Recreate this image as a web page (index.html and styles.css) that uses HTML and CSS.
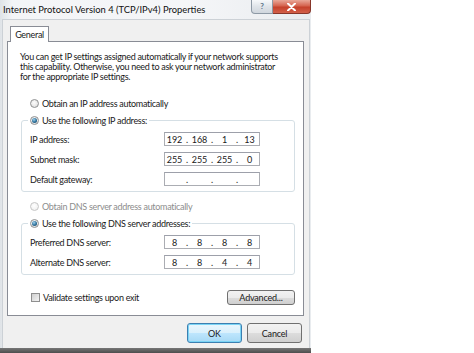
FILE: index.html
```html
<html>
<head>
<title>Internet Protocol Version 4 (TCP/IPv4) Properties</title>
<meta name="viewport" content="width=device-width, initial-scale=1">
<link rel="stylesheet" href="styles.css">
</head>
<body>
  <div class="window">
    <div class="titlebar">
      <span class="title">Internet Protocol Version 4 (TCP/IPv4) Properties</span>
      <div class="caption">
        <span class="help">?</span>
        <span class="close">
          <svg width="9" height="8" viewBox="0 0 9 8">
            <path d="M1 0.5 L8 7.5 M8 0.5 L1 7.5" stroke="#fff" stroke-width="2" stroke-linecap="round"></path>
          </svg>
        </span>
      </div>
    </div>
    <div class="client">
      <div class="tabs"><span class="tab">General</span></div>
      <div class="panel">
        <p class="intro">You can get IP settings assigned automatically if your network supports<br>this capability. Otherwise, you need to ask your network administrator<br>for the appropriate IP settings.</p>

        <div class="opt first"><span class="radio"></span>Obtain an IP address automatically</div>
        <fieldset class="group">
          <legend><span class="opt"><span class="radio on"></span>Use the following IP address:</span></legend>
          <div class="row"><span class="lbl">IP address:</span>
            <div class="ip"><span class="oct">192</span><span class="dot">.</span><span class="oct">168</span><span class="dot">.</span><span class="oct">1</span><span class="dot">.</span><span class="oct">13</span></div>
          </div>
          <div class="row"><span class="lbl">Subnet mask:</span>
            <div class="ip"><span class="oct">255</span><span class="dot">.</span><span class="oct">255</span><span class="dot">.</span><span class="oct">255</span><span class="dot">.</span><span class="oct">0</span></div>
          </div>
          <div class="row"><span class="lbl">Default gateway:</span>
            <div class="ip"><span class="oct"></span><span class="dot">.</span><span class="oct"></span><span class="dot">.</span><span class="oct"></span><span class="dot">.</span><span class="oct"></span></div>
          </div>
        </fieldset>

        <div class="opt off"><span class="radio"></span>Obtain DNS server address automatically</div>
        <fieldset class="group">
          <legend><span class="opt"><span class="radio on"></span>Use the following DNS server addresses:</span></legend>
          <div class="row"><span class="lbl">Preferred DNS server:</span>
            <div class="ip"><span class="oct">8</span><span class="dot">.</span><span class="oct">8</span><span class="dot">.</span><span class="oct">8</span><span class="dot">.</span><span class="oct">8</span></div>
          </div>
          <div class="row"><span class="lbl">Alternate DNS server:</span>
            <div class="ip"><span class="oct">8</span><span class="dot">.</span><span class="oct">8</span><span class="dot">.</span><span class="oct">4</span><span class="dot">.</span><span class="oct">4</span></div>
          </div>
        </fieldset>

        <div class="footer">
          <label class="check"><span class="box"></span>Validate settings upon exit</label>
          <button class="btn adv">Advanced...</button>
        </div>
      </div>
      <div class="actions">
        <button class="btn ok">OK</button>
        <button class="btn">Cancel</button>
      </div>
    </div>
  </div>
  <div class="shadow"></div>
</body>
</html>
```

FILE: styles.css
```css
body {
  margin: 0;
  background: #fff;
  font-family: Lato, "Noto Sans", sans-serif;
  font-size: 9px;
  letter-spacing: -0.3px;
  color: #1a1a1a;
}
.window {
  width: 311px;
  height: 348px;
  display: flex;
  flex-direction: column;
  background: linear-gradient(90deg, #dfe3e7, #f3f5f7 4%, #f5f6f8 60%, #e9ecef);
}
.titlebar {
  height: 19px;
  display: flex;
  justify-content: space-between;
  align-items: flex-start;
}
.title {
  padding: 4px 0 0 3px;
  font-size: 9.4px;
  letter-spacing: 0;
  line-height: 12px;
  color: #111;
}
.caption {display: flex;}
.help {
  width: 20px;
  height: 13px;
  border: 1px solid #8d99a5;
  border-top: 0;
  border-radius: 0 0 0 4px;
  background: linear-gradient(#f7f9fb, #dfe4e9 50%, #cfd6dd);
  color: #5d7389;
  font-size: 8px;
  line-height: 13px;
  text-align: center;
  font-weight: bold;
}
.close {
  width: 37px;
  height: 13px;
  border: 1px solid #87362a;
  border-top: 0;
  border-left: 0;
  border-radius: 0 0 4px 0;
  background: linear-gradient(#e9a899, #d5644f 45%, #c5412b 55%, #d2604a);
  display: flex;
  align-items: center;
  justify-content: center;
}
.client {
  flex: 1;
  margin: 0 1px 0 2px;
  padding: 6px 5px 0 4px;
  background: #f0f0f0;
  border: 1px solid #ccd1d6;
  border-bottom: 0;
}
.tabs {
  display: flex;
  padding-left: 3px;
}
.tab {
  height: 16px;
  width: 39px;
  box-sizing: border-box;
  border: 1px solid #898c95;
  border-bottom: 0;
  background: #fff;
  line-height: 15px;
  text-align: center;
  margin-bottom: -1px;
  position: relative;
  z-index: 1;
}
.panel {
  height: 275px;
  box-sizing: border-box;
  background: #fff;
  border: 1px solid #898c95;
}
.intro {
  margin: 10px 0 0 12px;
  line-height: 10px;
}
.opt {
  display: flex;
  align-items: center;
  gap: 3px;
  height: 12px;
}
.first {margin: 15px 0 0 22px;}
.off {
  margin: 8px 0 0 22px;
  color: #8d8d8d;
}
.radio {
  width: 9px;
  height: 9px;
  box-sizing: border-box;
  border-radius: 50%;
  border: 1px solid #8f9192;
  background: radial-gradient(circle at 45% 40%, #fdfdfd, #d9d9d9);
  display: flex;
  align-items: center;
  justify-content: center;
}
.off .radio {
  border-color: #c6c6c6;
  background: radial-gradient(circle at 45% 40%, #fff, #ececec);
}
.radio.on::after {
  content: "";
  width: 5px;
  height: 5px;
  border-radius: 50%;
  background: radial-gradient(circle at 40% 35%, #9fd2ee, #2b6e98 55%, #163d5a);
}
.group {
  margin: 5px 8px 0 13px;
  padding: 0 0 5px 8px;
  border: 1px solid #d5dfe5;
  border-radius: 3px;
}
.group legend {
  padding: 0 2px;
  margin-left: -2px;
}
.row {
  display: flex;
  align-items: center;
  height: 14px;
  margin-top: 6px;
}
.lbl {width: 134px;}
.ip {
  width: 96px;
  height: 14px;
  box-sizing: border-box;
  border: 1px solid #abadb3;
  border-top-color: #9da0aa;
  background: #fff;
  display: flex;
  align-items: center;
  letter-spacing: 0;
}
.oct {
  width: 19px;
  text-align: center;
}
.dot {
  width: 6px;
  text-align: center;
}
.footer {
  display: flex;
  justify-content: space-between;
  align-items: center;
  margin: 15px 8px 0 23px;
}
.check {
  display: flex;
  align-items: center;
  gap: 3px;
}
.box {
  width: 9px;
  height: 9px;
  box-sizing: border-box;
  border: 1px solid #8f8f8f;
  background: linear-gradient(135deg, #cfcfcf, #f4f4f4);
}
.btn {
  font-family: inherit;
  font-size: 9px;
  letter-spacing: -0.2px;
  color: #1a1a1a;
  padding: 0;
  border: 1px solid #707070;
  border-radius: 3px;
  background: linear-gradient(#f2f2f2, #ebebeb 50%, #dddddd 50%, #cfcfcf);
}
.adv {
  width: 68px;
  height: 15px;
}
.actions {
  display: flex;
  justify-content: flex-end;
  gap: 5px;
  margin-top: 7px;
  padding-right: 2px;
}
.actions .btn {
  width: 55px;
  height: 20px;
}
.btn.ok {
  border-color: #3c7fb1;
  background: linear-gradient(#eaf6fd, #d9f0fc 50%, #bee6fd 50%, #a7d9f5);
  box-shadow: inset 0 0 0 1px #7ad4f5;
}
.shadow {
  width: 311px;
  height: 5px;
  background: linear-gradient(#777, #4d4d4d);
}
```
